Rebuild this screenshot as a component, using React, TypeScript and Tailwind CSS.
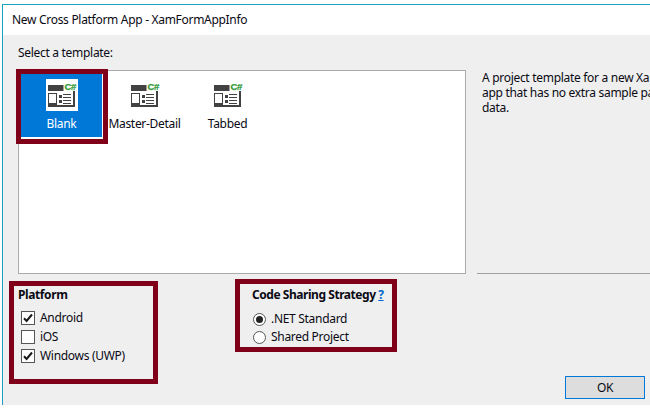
const font = { fontFamily: '"Noto Sans", "Open Sans", sans-serif' };

function TemplateIcon({ white }: { white?: boolean }) {
  return (
    <svg width="32" height="32" viewBox="0 0 32 32" className={white ? "bg-white" : ""}>
      <rect x="2" y="6" width="15.5" height="6" fill="#424242" />
      <text x="18.5" y="10.8" fontSize="9.5" fontWeight="700" fill="#2f9a35" stroke="#2f9a35" strokeWidth="0.25" fontFamily="Liberation Sans, sans-serif">C#</text>
      <rect x="27" y="12" width="2" height="16" fill="#424242" />
      <rect x="10" y="26" width="19" height="2" fill="#424242" />
      <rect x="2.5" y="14.5" width="8" height="13" fill="none" stroke="#424242" strokeWidth="1" />
      <rect x="2" y="24" width="9" height="4" fill="#424242" />
      <rect x="13" y="16" width="3" height="3" fill="#424242" />
      <rect x="13" y="21" width="3" height="3" fill="#424242" />
      <rect x="17" y="15" width="8" height="1" fill="#424242" />
      <rect x="17" y="18" width="8" height="1" fill="#424242" />
      <rect x="17" y="21" width="8" height="1" fill="#424242" />
      <rect x="17" y="24" width="8" height="1" fill="#424242" />
    </svg>
  );
}

function Tile({ label, selected }: { label: string; selected?: boolean }) {
  return (
    <div className={selected ? "w-[82px] h-[65px] outline-[5px] outline-solid outline-[#80001a] bg-white" : "w-[82px] h-[65px]"}>
      <div className={selected ? "h-[63px] w-[81px] bg-[#0078d7] flex flex-col items-center" : "h-[63px] w-[81px] flex flex-col items-center"}>
        <div className="mt-[5px]">
          <TemplateIcon white={selected} />
        </div>
        <div className={selected ? "mt-[4px] text-[12px] leading-[18px] text-white whitespace-nowrap" : "mt-[4px] text-[12px] leading-[18px] text-[#0a0a14] whitespace-nowrap"}>
          {label}
        </div>
      </div>
    </div>
  );
}

function Check({ label, checked }: { label: string; checked?: boolean }) {
  return (
    <div className="flex items-center h-[19px]">
      <div className="w-[14px] h-[14px] border border-[#555] bg-white flex items-center justify-center">
        {checked && (
          <svg width="12" height="12" viewBox="0 0 12 12">
            <path d="M2 6.2 L4.6 9 L10 2.5" fill="none" stroke="#1a1a1a" strokeWidth="2" />
          </svg>
        )}
      </div>
      <span className="ml-[5px] text-[12px] text-[#0a0a14] whitespace-nowrap">{label}</span>
    </div>
  );
}

function Radio({ label, checked }: { label: string; checked?: boolean }) {
  return (
    <div className="flex items-center h-[18px]">
      <div className="w-[13px] h-[13px] rounded-full border border-[#555] bg-white flex items-center justify-center">
        {checked && <div className="w-[7px] h-[7px] rounded-full bg-[#222]" />}
      </div>
      <span className="ml-[5px] text-[12px] text-[#0a0a14] whitespace-nowrap">{label}</span>
    </div>
  );
}

export default function App() {
  return (
    <div className="w-[650px] h-[411px] bg-white overflow-hidden pt-[4px] pl-[2px] tracking-[-0.3px]" style={font}>
      <div className="h-[401px] border-t border-l border-[#17a2c4] flex flex-col">
        <div className="h-[30px] bg-white flex items-center pl-[9px] text-[12px] text-[#0a0a14] whitespace-nowrap">
          New Cross Platform App - XamFormAppInfo
        </div>
        <div className="flex-1 bg-[#efefef] flex flex-col">
          <div className="h-[35px] pl-[15px] pt-[9px] text-[12px] leading-[18px] text-[#0a0a14]">Select a template:</div>
          <div className="flex items-start pl-[15px]">
            <div className="w-[448px] h-[204px] border border-[#ababab] bg-white pt-[3px] pl-[2px] flex shrink-0">
              <Tile label="Blank" selected />
              <div className="ml-[1px]"><Tile label="Master-Detail" /></div>
              <div className="ml-[1px]"><Tile label="Tabbed" /></div>
            </div>
            <div className="flex-1 flex flex-col h-[204px] ml-[11px] min-w-0 overflow-hidden">
              <div className="flex-1 pl-[5px] text-[12px] leading-[15px] text-[#0a0a14] whitespace-nowrap">
                <div>A project template for a new Xamarin.Forms</div>
                <div>app that has no extra sample pages and one</div>
                <div>data.</div>
              </div>
              <div className="h-px bg-[#a0a0a0]" />
            </div>
          </div>
          <div className="flex items-start mt-[5px] ml-[6px] pr-[5px]">
            <div className="mt-[2px] w-[149px] h-[103px] border-[5px] border-[#80001a] pl-[4px]">
              <div className="text-[12px] font-bold leading-[18px] text-[#0a0a14] tracking-[-0.4px]">Platform</div>
              <div className="mt-[4px] pl-[3px]">
                <Check label="Android" checked />
                <Check label="iOS" />
                <Check label="Windows (UWP)" checked />
              </div>
            </div>
            <div className="ml-[77px] w-[162px] h-[73px] border-[5px] border-[#80001a] pl-[12px]">
              <div className="text-[12px] font-bold leading-[18px] text-[#0a0a14] pt-[2px] whitespace-nowrap tracking-[-0.45px]">
                Code Sharing Strategy <span className="text-[#0066cc] underline">?</span>
              </div>
              <div className="mt-[6px] pl-[1px]">
                <Radio label=".NET Standard" checked />
                <Radio label="Shared Project" />
              </div>
            </div>
            <div className="ml-auto mt-[97px] w-[80px] h-[23px] border border-[#0078d7] bg-[#dddddd] flex items-center justify-center text-[12px] text-[#0a0a14]">
              OK
            </div>
          </div>
        </div>
      </div>
    </div>
  );
}
